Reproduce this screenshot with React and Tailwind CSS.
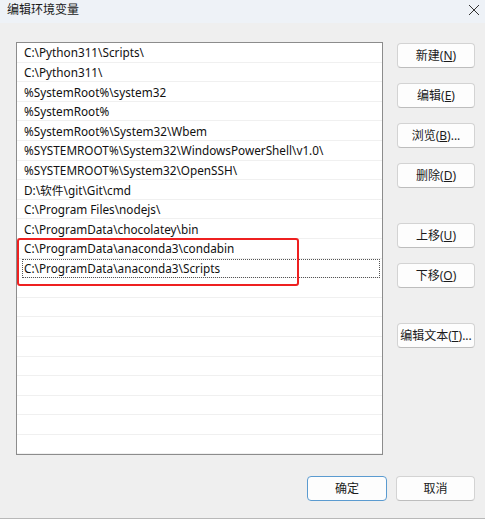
import React from "react";

const PATHS = [
  "C:\\Python311\\Scripts\\",
  "C:\\Python311\\",
  "%SystemRoot%\\system32",
  "%SystemRoot%",
  "%SystemRoot%\\System32\\Wbem",
  "%SYSTEMROOT%\\System32\\WindowsPowerShell\\v1.0\\",
  "%SYSTEMROOT%\\System32\\OpenSSH\\",
  "D:\\软件\\git\\Git\\cmd",
  "C:\\Program Files\\nodejs\\",
  "C:\\ProgramData\\chocolatey\\bin",
  "C:\\ProgramData\\anaconda3\\condabin",
  "C:\\ProgramData\\anaconda3\\Scripts",
];

const SELECTED = 11;
const EMPTY_ROWS = 9;

const FONT = {
  fontFamily: '"Noto Sans", "Noto Sans CJK SC", sans-serif',
};

// side button with an underlined access key
const SideButton = ({ label, hotkey, suffix = "", className = "" }) => (
  <button
    className={`w-[78px] h-[25px] rounded-[4px] border border-[#d3d3d3] border-b-[#bdbdbd] bg-[#fdfdfd] text-[12px] text-[#1b1b1b] leading-none flex items-center justify-center ${className}`}
  >
    {label}(<span className="underline">{hotkey}</span>){suffix}
  </button>
);

export default function App() {
  return (
    <div
      className="w-[485px] h-[519px] bg-[#efefef] flex flex-col border-b border-[#b8b8b8]"
      style={FONT}
    >
      {/* title bar */}
      <div className="h-[23px] bg-[#eef2f7] flex items-center justify-between pl-[7px] pr-[5px]">
        <span className="text-[12px] text-[#1a1a1a] -mt-[3px]">编辑环境变量</span>
        <svg width="12" height="12" viewBox="0 0 12 12" className="mb-[3px]">
          <path d="M1 1L11 11M11 1L1 11" stroke="#333" strokeWidth="1" />
        </svg>
      </div>

      <div className="flex pt-[19px] pl-[16px]">
        {/* path list */}
        <div className="w-[367px] h-[413px] border border-[#8c8c8c] bg-white flex flex-col overflow-hidden relative">
          {PATHS.map((p, i) => (
            <div
              key={p}
              className={`h-[19.6px] shrink-0 flex items-center pt-[2px] text-[11.75px] text-[#111] border-b border-[#f0f0f0] whitespace-nowrap ${
                i === SELECTED
                  ? "outline outline-1 outline-dotted outline-[#555] -outline-offset-1 ml-[5px] mr-[2px] pl-[2px]"
                  : "pl-[7px]"
              }`}
            >
              {p}
            </div>
          ))}
          {Array.from({ length: EMPTY_ROWS }).map((_, i) => (
            <div
              key={i}
              className="h-[19.6px] shrink-0 border-b border-[#f0f0f0]"
            />
          ))}
          {/* red highlight box */}
          <div className="absolute left-0 top-[195px] w-[282px] h-[48px] border-[2.5px] border-[#ee2020] rounded-[3px]" />
        </div>

        {/* buttons */}
        <div className="flex flex-col ml-[14px] gap-[15px] pt-[1px]">
          <SideButton label="新建" hotkey="N" />
          <SideButton label="编辑" hotkey="E" />
          <SideButton label="浏览" hotkey="B" suffix="..." />
          <SideButton label="删除" hotkey="D" />
          <SideButton label="上移" hotkey="U" className="mt-[20px]" />
          <SideButton label="下移" hotkey="O" />
          <SideButton label="编辑文本" hotkey="T" suffix="..." className="mt-[20px]" />
        </div>
      </div>

      {/* footer */}
      <div className="flex justify-end gap-[9px] pr-[10px] mt-[21px]">
        <button className="w-[80px] h-[25px] rounded-[4px] border-[1.5px] border-[#5b9bd0] bg-[#fdfdfd] text-[12px] text-[#1b1b1b]">
          确定
        </button>
        <button className="w-[79px] h-[25px] rounded-[4px] border border-[#d3d3d3] border-b-[#bdbdbd] bg-[#fdfdfd] text-[12px] text-[#1b1b1b]">
          取消
        </button>
      </div>
    </div>
  );
}
